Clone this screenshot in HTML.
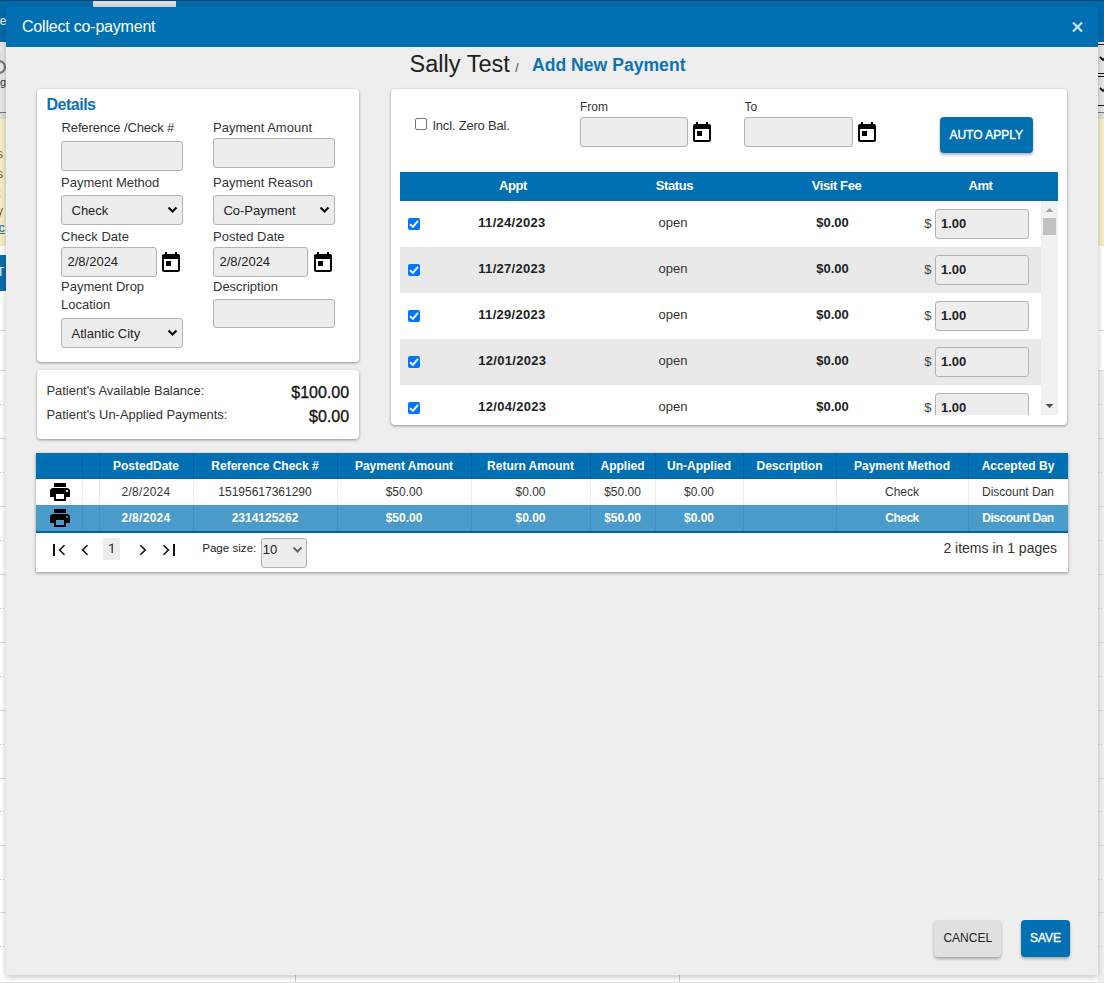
<!DOCTYPE html>
<html><head><meta charset="utf-8">
<style>
*{box-sizing:border-box;margin:0;padding:0}
html,body{width:1104px;height:983px;overflow:hidden;background:#fff;font-family:"Liberation Sans",sans-serif;color:#333}
.a{position:absolute}
.t{position:absolute;white-space:nowrap;line-height:1}
.panel{position:absolute;background:#fff;border-radius:4px;box-shadow:0 1px 3px rgba(0,0,0,.4)}
</style></head>
<body>
<div class="a" style="left:0px;top:0px;width:1104px;height:42px;background:#006bab"></div>
<div class="a" style="left:0px;top:0px;width:1104px;height:1px;background:#00466f"></div>
<div class="a" style="left:93px;top:1px;width:83px;height:6px;background:#dcdcdc"></div>
<div class="a" style="left:0px;top:42px;width:1104px;height:70px;background:#e6e6e6"></div>
<div class="a" style="left:0px;top:112px;width:1104px;height:1px;background:#7a7a7a"></div>
<div class="a" style="left:0px;top:113px;width:1104px;height:6px;background:#dedede"></div>
<div class="a" style="left:0px;top:119px;width:1104px;height:127px;background:#f7ecc9"></div>
<div class="a" style="left:0px;top:255px;width:8px;height:36px;background:#0a6eb0"></div>
<div class="t" style="left:-3px;top:14.84px;font-size:12px;color:#fff;font-weight:normal;">ie</div>
<svg class="a" style="left:-8px;top:50px" width="14" height="28" viewBox="0 0 14 28"><circle cx="7" cy="17" r="6" stroke="#777" stroke-width="2.2" fill="none"/><path d="M7 2V10" stroke="#777" stroke-width="2.2"/></svg>
<div class="t" style="left:-6px;top:76.69px;font-size:11px;color:#333;font-weight:normal;">ng</div>
<div class="t" style="left:-3px;top:147.84px;font-size:12px;color:#6a5a3a;font-weight:normal;">s</div>
<div class="t" style="left:-3px;top:167.84px;font-size:12px;color:#6a5a3a;font-weight:normal;">s</div>
<div class="t" style="left:-3px;top:186.84px;font-size:12px;color:#6a5a3a;font-weight:normal;">t</div>
<div class="t" style="left:-3px;top:204.84px;font-size:12px;color:#6a5a3a;font-weight:normal;">y</div>
<div class="t" style="left:-8px;top:222.34px;font-size:12px;color:#1a6fb0;font-weight:normal;text-decoration:underline">ec</div>
<div class="t" style="left:-3px;top:266.34px;font-size:12px;color:#fff;font-weight:normal;">T</div>
<div class="a" style="left:1098px;top:44px;width:6px;height:1px;background:#111"></div>
<div class="a" style="left:1098px;top:73px;width:6px;height:1px;background:#111"></div>
<div class="a" style="left:1098px;top:76px;width:6px;height:1px;background:#111"></div>
<div class="a" style="left:1098px;top:105px;width:6px;height:1px;background:#111"></div>
<svg class="a" style="left:1099px;top:56px" width="8" height="6" viewBox="0 0 8 6"><path d="M1 1L4 4L7 1" stroke="#111" stroke-width="1.8" fill="none"/></svg>
<svg class="a" style="left:1099px;top:87px" width="8" height="6" viewBox="0 0 8 6"><path d="M1 1L4 4L7 1" stroke="#111" stroke-width="1.8" fill="none"/></svg>
<div class="a" style="left:1098px;top:371px;width:6px;height:612px;background:#f0f0f0"></div>
<div class="a" style="left:0px;top:330px;width:1104px;height:1px;background:#dcdcdc"></div>
<div class="a" style="left:0px;top:370px;width:1104px;height:1px;background:#dcdcdc"></div>
<div class="a" style="left:0px;top:404px;width:1104px;height:1px;background:repeating-linear-gradient(90deg,#c8c8c8 0 1px,transparent 1px 3px)"></div>
<div class="a" style="left:0px;top:438px;width:1104px;height:1px;background:#dcdcdc"></div>
<div class="a" style="left:0px;top:472px;width:1104px;height:1px;background:repeating-linear-gradient(90deg,#c8c8c8 0 1px,transparent 1px 3px)"></div>
<div class="a" style="left:0px;top:506px;width:1104px;height:1px;background:#dcdcdc"></div>
<div class="a" style="left:0px;top:540px;width:1104px;height:1px;background:repeating-linear-gradient(90deg,#c8c8c8 0 1px,transparent 1px 3px)"></div>
<div class="a" style="left:0px;top:574px;width:1104px;height:1px;background:#dcdcdc"></div>
<div class="a" style="left:0px;top:608px;width:1104px;height:1px;background:repeating-linear-gradient(90deg,#c8c8c8 0 1px,transparent 1px 3px)"></div>
<div class="a" style="left:0px;top:642px;width:1104px;height:1px;background:#dcdcdc"></div>
<div class="a" style="left:0px;top:676px;width:1104px;height:1px;background:repeating-linear-gradient(90deg,#c8c8c8 0 1px,transparent 1px 3px)"></div>
<div class="a" style="left:0px;top:710px;width:1104px;height:1px;background:#dcdcdc"></div>
<div class="a" style="left:0px;top:744px;width:1104px;height:1px;background:repeating-linear-gradient(90deg,#c8c8c8 0 1px,transparent 1px 3px)"></div>
<div class="a" style="left:0px;top:778px;width:1104px;height:1px;background:#dcdcdc"></div>
<div class="a" style="left:0px;top:811px;width:1104px;height:1px;background:repeating-linear-gradient(90deg,#c8c8c8 0 1px,transparent 1px 3px)"></div>
<div class="a" style="left:0px;top:845px;width:1104px;height:1px;background:#dcdcdc"></div>
<div class="a" style="left:0px;top:879px;width:1104px;height:1px;background:repeating-linear-gradient(90deg,#c8c8c8 0 1px,transparent 1px 3px)"></div>
<div class="a" style="left:0px;top:912px;width:1104px;height:1px;background:#dcdcdc"></div>
<div class="a" style="left:0px;top:946px;width:1104px;height:1px;background:repeating-linear-gradient(90deg,#c8c8c8 0 1px,transparent 1px 3px)"></div>
<div class="a" style="left:0px;top:982px;width:1104px;height:1px;background:#e3e3e3"></div>
<div class="a" style="left:295px;top:975px;width:1px;height:7px;background:#d0d0d0"></div>
<div class="a" style="left:679px;top:975px;width:1px;height:7px;background:#d0d0d0"></div>
<div class="a" style="left:6px;top:7px;width:1092px;height:968px;background:#eeeeee;box-shadow:0 2px 6px rgba(0,0,0,.25)"></div>
<div class="a" style="left:6px;top:7px;width:1092px;height:40px;background:#0070b2"></div>
<div class="t" style="left:22px;top:19.06px;font-size:16px;color:#fff;font-weight:normal;letter-spacing:-0.2px">Collect co-payment</div>
<svg class="a" style="left:1072px;top:22px" width="11" height="10" viewBox="0 0 11 10"><path d="M1 0.5L10 9.5M10 0.5L1 9.5" stroke="#cde3f2" stroke-width="2.2"/></svg>
<div class="t" style="left:409.6px;top:52.71px;font-size:23.5px;color:#212121;font-weight:normal;">Sally Test</div>
<div class="t" style="left:515.3px;top:62.34px;font-size:12px;color:#444;font-weight:normal;">/</div>
<div class="t" style="left:532px;top:56.50px;font-size:17.6px;color:#0e72b5;font-weight:bold;">Add New Payment</div>
<div class="panel" style="left:37px;top:89px;width:322px;height:273px"></div>
<div class="t" style="left:46.5px;top:97.46px;font-size:16px;color:#0e72b5;font-weight:bold;letter-spacing:-0.5px">Details</div>
<div class="t" style="left:61.5px;top:120.80px;font-size:13px;color:#333;font-weight:normal;letter-spacing:-0.12px">Reference /Check #</div>
<div class="t" style="left:213px;top:120.60px;font-size:13px;color:#333;font-weight:normal;">Payment Amount</div>
<div class="a" style="left:61px;top:141px;width:122px;height:30px;background:#ededed;border:1px solid #b3b3b3;border-radius:3px"></div>
<div class="a" style="left:213px;top:138px;width:122px;height:30px;background:#ededed;border:1px solid #b3b3b3;border-radius:3px"></div>
<div class="t" style="left:61px;top:176.00px;font-size:13px;color:#333;font-weight:normal;">Payment Method</div>
<div class="t" style="left:213px;top:176.00px;font-size:13px;color:#333;font-weight:normal;">Payment Reason</div>
<div class="a" style="left:61px;top:195px;width:122px;height:30px;background:#ededed;border:1px solid #b3b3b3;border-radius:3px"></div>
<div class="t" style="left:71.5px;top:204.20px;font-size:13px;color:#222;font-weight:normal;">Check</div>
<svg class="a" style="left:167px;top:206px" width="11" height="8" viewBox="0 0 11 8"><path d="M1.5 1.5L5.5 5.5L9.5 1.5" stroke="#111" stroke-width="2.2" fill="none"/></svg>
<div class="a" style="left:213px;top:195px;width:122px;height:30px;background:#ededed;border:1px solid #b3b3b3;border-radius:3px"></div>
<div class="t" style="left:223.4px;top:204.20px;font-size:13px;color:#222;font-weight:normal;">Co-Payment</div>
<svg class="a" style="left:319px;top:206px" width="11" height="8" viewBox="0 0 11 8"><path d="M1.5 1.5L5.5 5.5L9.5 1.5" stroke="#111" stroke-width="2.2" fill="none"/></svg>
<div class="t" style="left:61px;top:230.00px;font-size:13px;color:#333;font-weight:normal;">Check Date</div>
<div class="t" style="left:213px;top:230.00px;font-size:13px;color:#333;font-weight:normal;">Posted Date</div>
<div class="a" style="left:61px;top:247px;width:96px;height:30px;background:#ededed;border:1px solid #b3b3b3;border-radius:3px"></div>
<div class="t" style="left:67.5px;top:254.80px;font-size:13px;color:#222;font-weight:normal;">2/8/2024</div>
<div class="a" style="left:213px;top:247px;width:95px;height:30px;background:#ededed;border:1px solid #b3b3b3;border-radius:3px"></div>
<div class="t" style="left:219.5px;top:254.80px;font-size:13px;color:#222;font-weight:normal;">2/8/2024</div>
<svg class="a" style="left:159px;top:251px" width="24" height="24" viewBox="0 0 24 24"><path d="M19 3h-1V1h-2v2H8V1H6v2H5c-1.11 0-1.99.9-1.99 2L3 19c0 1.1.89 2 2 2h14c1.1 0 2-.9 2-2V5c0-1.1-.9-2-2-2zm0 16H5V8h14v11zM7 10h5v5H7z"/></svg>
<svg class="a" style="left:311px;top:251px" width="24" height="24" viewBox="0 0 24 24"><path d="M19 3h-1V1h-2v2H8V1H6v2H5c-1.11 0-1.99.9-1.99 2L3 19c0 1.1.89 2 2 2h14c1.1 0 2-.9 2-2V5c0-1.1-.9-2-2-2zm0 16H5V8h14v11zM7 10h5v5H7z"/></svg>
<div class="t" style="left:61px;top:280.00px;font-size:13px;color:#333;font-weight:normal;">Payment Drop</div>
<div class="t" style="left:61px;top:297.80px;font-size:13px;color:#333;font-weight:normal;">Location</div>
<div class="t" style="left:213px;top:280.40px;font-size:13px;color:#333;font-weight:normal;">Description</div>
<div class="a" style="left:61px;top:318px;width:122px;height:30px;background:#ededed;border:1px solid #b3b3b3;border-radius:3px"></div>
<div class="t" style="left:71.5px;top:327.20px;font-size:13px;color:#222;font-weight:normal;">Atlantic City</div>
<svg class="a" style="left:167px;top:329px" width="11" height="8" viewBox="0 0 11 8"><path d="M1.5 1.5L5.5 5.5L9.5 1.5" stroke="#111" stroke-width="2.2" fill="none"/></svg>
<div class="a" style="left:213px;top:299px;width:122px;height:29px;background:#ededed;border:1px solid #b3b3b3;border-radius:3px"></div>
<div class="panel" style="left:37px;top:370px;width:322px;height:69px"></div>
<div class="t" style="left:46.5px;top:384.78px;font-size:12.9px;color:#333;font-weight:normal;">Patient's Available Balance:</div>
<div class="t" style="left:46.5px;top:408.88px;font-size:12.9px;color:#333;font-weight:normal;">Patient's Un-Applied Payments:</div>
<div class="t" style="right:754.9px;top:385.06px;font-size:16px;color:#111;font-weight:normal;-webkit-text-stroke:0.3px #111">$100.00</div>
<div class="t" style="right:754.9px;top:409.06px;font-size:16px;color:#111;font-weight:normal;-webkit-text-stroke:0.3px #111">$0.00</div>
<div class="panel" style="left:391px;top:89px;width:676px;height:336px"></div>
<div class="a" style="left:415px;top:118px;width:12px;height:12px;border:1px solid #767676;border-radius:2px;background:#fff"></div>
<div class="t" style="left:432.4px;top:119.00px;font-size:13px;color:#333;font-weight:normal;letter-spacing:-0.2px">Incl. Zero Bal.</div>
<div class="t" style="left:580px;top:100.84px;font-size:12px;color:#333;font-weight:normal;">From</div>
<div class="a" style="left:580px;top:117px;width:108px;height:30px;background:#ededed;border:1px solid #b3b3b3;border-radius:3px"></div>
<svg class="a" style="left:690px;top:121px" width="24" height="24" viewBox="0 0 24 24"><path d="M19 3h-1V1h-2v2H8V1H6v2H5c-1.11 0-1.99.9-1.99 2L3 19c0 1.1.89 2 2 2h14c1.1 0 2-.9 2-2V5c0-1.1-.9-2-2-2zm0 16H5V8h14v11zM7 10h5v5H7z"/></svg>
<div class="t" style="left:744.5px;top:100.84px;font-size:12px;color:#333;font-weight:normal;">To</div>
<div class="a" style="left:744px;top:117px;width:109px;height:30px;background:#ededed;border:1px solid #b3b3b3;border-radius:3px"></div>
<svg class="a" style="left:855px;top:121px" width="24" height="24" viewBox="0 0 24 24"><path d="M19 3h-1V1h-2v2H8V1H6v2H5c-1.11 0-1.99.9-1.99 2L3 19c0 1.1.89 2 2 2h14c1.1 0 2-.9 2-2V5c0-1.1-.9-2-2-2zm0 16H5V8h14v11zM7 10h5v5H7z"/></svg>
<div class="a" style="left:940px;top:117px;width:93px;height:36px;background:#0070b2;border-radius:4px;box-shadow:0 2px 3px rgba(0,0,0,.3)"></div>
<div class="t" style="left:949.4px;top:128.74px;font-size:12px;color:#fff;font-weight:normal;-webkit-text-stroke:0.35px #fff">AUTO APPLY</div>
<div class="a" style="left:400px;top:172px;width:658px;height:29px;background:#0070b2"></div>
<div class="t" style="left:430px;width:166px;text-align:center;top:179.00px;font-size:13px;color:#fff;font-weight:bold;letter-spacing:-0.4px">Appt</div>
<div class="t" style="left:596px;width:157px;text-align:center;top:179.00px;font-size:13px;color:#fff;font-weight:bold;letter-spacing:-0.4px">Status</div>
<div class="t" style="left:753px;width:167px;text-align:center;top:179.00px;font-size:13px;color:#fff;font-weight:bold;letter-spacing:-0.4px">Visit Fee</div>
<div class="t" style="left:920px;width:121px;text-align:center;top:179.00px;font-size:13px;color:#fff;font-weight:bold;letter-spacing:-0.4px">Amt</div>
<div class="a" style="left:400px;top:201px;width:641px;height:214px;overflow:hidden">
<svg class="a" style="left:8px;top:17px" width="12" height="12" viewBox="0 0 12 12"><rect x="0" y="0" width="12" height="12" rx="2" fill="#0075ff"/><path d="M2 6.2L4.9 8.9L10 2.8" stroke="#fff" stroke-width="2" fill="none"/></svg>
<div class="t" style="left:78.3px;top:15.10px;font-size:13px;color:#222;font-weight:bold;letter-spacing:0.3px">11/24/2023</div>
<div class="t" style="left:258.6px;top:15.00px;font-size:13px;color:#333;font-weight:normal;">open</div>
<div class="t" style="left:416.2px;top:15.00px;font-size:13px;color:#222;font-weight:bold;">$0.00</div>
<div class="t" style="left:524.3px;top:16.00px;font-size:13px;color:#444;font-weight:normal;">$</div>
<div class="a" style="left:535px;top:8px;width:94px;height:30px;background:#ededed;border:1px solid #b3b3b3;border-radius:3px"></div>
<div class="t" style="left:541px;top:16.00px;font-size:13px;color:#222;font-weight:bold;">1.00</div>
<div class="a" style="left:0px;top:46px;width:641px;height:46px;background:#e9e9e9"></div>
<svg class="a" style="left:8px;top:63px" width="12" height="12" viewBox="0 0 12 12"><rect x="0" y="0" width="12" height="12" rx="2" fill="#0075ff"/><path d="M2 6.2L4.9 8.9L10 2.8" stroke="#fff" stroke-width="2" fill="none"/></svg>
<div class="t" style="left:78.3px;top:61.10px;font-size:13px;color:#222;font-weight:bold;letter-spacing:0.3px">11/27/2023</div>
<div class="t" style="left:258.6px;top:61.00px;font-size:13px;color:#333;font-weight:normal;">open</div>
<div class="t" style="left:416.2px;top:61.00px;font-size:13px;color:#222;font-weight:bold;">$0.00</div>
<div class="t" style="left:524.3px;top:62.00px;font-size:13px;color:#444;font-weight:normal;">$</div>
<div class="a" style="left:535px;top:54px;width:94px;height:30px;background:#ededed;border:1px solid #b3b3b3;border-radius:3px"></div>
<div class="t" style="left:541px;top:62.00px;font-size:13px;color:#222;font-weight:bold;">1.00</div>
<svg class="a" style="left:8px;top:109px" width="12" height="12" viewBox="0 0 12 12"><rect x="0" y="0" width="12" height="12" rx="2" fill="#0075ff"/><path d="M2 6.2L4.9 8.9L10 2.8" stroke="#fff" stroke-width="2" fill="none"/></svg>
<div class="t" style="left:78.3px;top:107.10px;font-size:13px;color:#222;font-weight:bold;letter-spacing:0.3px">11/29/2023</div>
<div class="t" style="left:258.6px;top:107.00px;font-size:13px;color:#333;font-weight:normal;">open</div>
<div class="t" style="left:416.2px;top:107.00px;font-size:13px;color:#222;font-weight:bold;">$0.00</div>
<div class="t" style="left:524.3px;top:108.00px;font-size:13px;color:#444;font-weight:normal;">$</div>
<div class="a" style="left:535px;top:100px;width:94px;height:30px;background:#ededed;border:1px solid #b3b3b3;border-radius:3px"></div>
<div class="t" style="left:541px;top:108.00px;font-size:13px;color:#222;font-weight:bold;">1.00</div>
<div class="a" style="left:0px;top:138px;width:641px;height:46px;background:#e9e9e9"></div>
<svg class="a" style="left:8px;top:155px" width="12" height="12" viewBox="0 0 12 12"><rect x="0" y="0" width="12" height="12" rx="2" fill="#0075ff"/><path d="M2 6.2L4.9 8.9L10 2.8" stroke="#fff" stroke-width="2" fill="none"/></svg>
<div class="t" style="left:78.3px;top:153.10px;font-size:13px;color:#222;font-weight:bold;letter-spacing:0.3px">12/01/2023</div>
<div class="t" style="left:258.6px;top:153.00px;font-size:13px;color:#333;font-weight:normal;">open</div>
<div class="t" style="left:416.2px;top:153.00px;font-size:13px;color:#222;font-weight:bold;">$0.00</div>
<div class="t" style="left:524.3px;top:154.00px;font-size:13px;color:#444;font-weight:normal;">$</div>
<div class="a" style="left:535px;top:146px;width:94px;height:30px;background:#ededed;border:1px solid #b3b3b3;border-radius:3px"></div>
<div class="t" style="left:541px;top:154.00px;font-size:13px;color:#222;font-weight:bold;">1.00</div>
<svg class="a" style="left:8px;top:201px" width="12" height="12" viewBox="0 0 12 12"><rect x="0" y="0" width="12" height="12" rx="2" fill="#0075ff"/><path d="M2 6.2L4.9 8.9L10 2.8" stroke="#fff" stroke-width="2" fill="none"/></svg>
<div class="t" style="left:78.3px;top:199.10px;font-size:13px;color:#222;font-weight:bold;letter-spacing:0.3px">12/04/2023</div>
<div class="t" style="left:258.6px;top:199.00px;font-size:13px;color:#333;font-weight:normal;">open</div>
<div class="t" style="left:416.2px;top:199.00px;font-size:13px;color:#222;font-weight:bold;">$0.00</div>
<div class="t" style="left:524.3px;top:200.00px;font-size:13px;color:#444;font-weight:normal;">$</div>
<div class="a" style="left:535px;top:192px;width:94px;height:30px;background:#ededed;border:1px solid #b3b3b3;border-radius:3px"></div>
<div class="t" style="left:541px;top:200.00px;font-size:13px;color:#222;font-weight:bold;">1.00</div>
</div>
<div class="a" style="left:1041px;top:201px;width:17px;height:214px;background:#f1f1f1"></div>
<svg class="a" style="left:1045px;top:207px" width="9" height="6" viewBox="0 0 9 6"><path d="M0.5 5L4.5 1L8.5 5z" fill="#a3a3a3"/></svg>
<div class="a" style="left:1043px;top:218px;width:13px;height:17px;background:#c1c1c1"></div>
<svg class="a" style="left:1045px;top:403px" width="9" height="6" viewBox="0 0 9 6"><path d="M0.5 1L4.5 5L8.5 1z" fill="#505050"/></svg>
<div class="panel" style="left:36px;top:453px;width:1032px;height:119px;border-radius:0"></div>
<div class="a" style="left:36px;top:453px;width:1032px;height:26px;background:#0070b2"></div>
<div class="a" style="left:36px;top:505px;width:1032px;height:26px;background:#4a9bc9"></div>
<div class="a" style="left:36px;top:478px;width:1032px;height:1px;background:#0063a3"></div>
<div class="a" style="left:36px;top:531px;width:1032px;height:2px;background:#0064a3"></div>
<div class="a" style="left:82px;top:453px;width:1px;height:26px;background:#0062a0"></div>
<div class="a" style="left:82px;top:479px;width:1px;height:26px;background:#ececec"></div>
<div class="a" style="left:82px;top:505px;width:1px;height:26px;background:#4190bf"></div>
<div class="a" style="left:99px;top:453px;width:1px;height:26px;background:#0062a0"></div>
<div class="a" style="left:99px;top:479px;width:1px;height:26px;background:#ececec"></div>
<div class="a" style="left:99px;top:505px;width:1px;height:26px;background:#4190bf"></div>
<div class="a" style="left:193px;top:453px;width:1px;height:26px;background:#0062a0"></div>
<div class="a" style="left:193px;top:479px;width:1px;height:26px;background:#ececec"></div>
<div class="a" style="left:193px;top:505px;width:1px;height:26px;background:#4190bf"></div>
<div class="a" style="left:337px;top:453px;width:1px;height:26px;background:#0062a0"></div>
<div class="a" style="left:337px;top:479px;width:1px;height:26px;background:#ececec"></div>
<div class="a" style="left:337px;top:505px;width:1px;height:26px;background:#4190bf"></div>
<div class="a" style="left:471px;top:453px;width:1px;height:26px;background:#0062a0"></div>
<div class="a" style="left:471px;top:479px;width:1px;height:26px;background:#ececec"></div>
<div class="a" style="left:471px;top:505px;width:1px;height:26px;background:#4190bf"></div>
<div class="a" style="left:590px;top:453px;width:1px;height:26px;background:#0062a0"></div>
<div class="a" style="left:590px;top:479px;width:1px;height:26px;background:#ececec"></div>
<div class="a" style="left:590px;top:505px;width:1px;height:26px;background:#4190bf"></div>
<div class="a" style="left:655px;top:453px;width:1px;height:26px;background:#0062a0"></div>
<div class="a" style="left:655px;top:479px;width:1px;height:26px;background:#ececec"></div>
<div class="a" style="left:655px;top:505px;width:1px;height:26px;background:#4190bf"></div>
<div class="a" style="left:743px;top:453px;width:1px;height:26px;background:#0062a0"></div>
<div class="a" style="left:743px;top:479px;width:1px;height:26px;background:#ececec"></div>
<div class="a" style="left:743px;top:505px;width:1px;height:26px;background:#4190bf"></div>
<div class="a" style="left:836px;top:453px;width:1px;height:26px;background:#0062a0"></div>
<div class="a" style="left:836px;top:479px;width:1px;height:26px;background:#ececec"></div>
<div class="a" style="left:836px;top:505px;width:1px;height:26px;background:#4190bf"></div>
<div class="a" style="left:968px;top:453px;width:1px;height:26px;background:#0062a0"></div>
<div class="a" style="left:968px;top:479px;width:1px;height:26px;background:#ececec"></div>
<div class="a" style="left:968px;top:505px;width:1px;height:26px;background:#4190bf"></div>
<div class="t" style="left:99px;width:94px;text-align:center;top:459.64px;font-size:12px;color:#fff;font-weight:bold;">PostedDate</div>
<div class="t" style="left:99px;width:94px;text-align:center;top:485.74px;font-size:12px;color:#333;font-weight:normal;letter-spacing:0.3px">2/8/2024</div>
<div class="t" style="left:99px;width:94px;text-align:center;top:511.64px;font-size:12px;color:#fff;font-weight:bold;letter-spacing:0.3px">2/8/2024</div>
<div class="t" style="left:193px;width:144px;text-align:center;top:459.64px;font-size:12px;color:#fff;font-weight:bold;">Reference Check #</div>
<div class="t" style="left:193px;width:144px;text-align:center;top:485.74px;font-size:12px;color:#333;font-weight:normal;">15195617361290</div>
<div class="t" style="left:193px;width:144px;text-align:center;top:511.64px;font-size:12px;color:#fff;font-weight:bold;">2314125262</div>
<div class="t" style="left:337px;width:134px;text-align:center;top:459.64px;font-size:12px;color:#fff;font-weight:bold;">Payment Amount</div>
<div class="t" style="left:337px;width:134px;text-align:center;top:485.74px;font-size:12px;color:#333;font-weight:normal;">$50.00</div>
<div class="t" style="left:337px;width:134px;text-align:center;top:511.64px;font-size:12px;color:#fff;font-weight:bold;">$50.00</div>
<div class="t" style="left:471px;width:119px;text-align:center;top:459.64px;font-size:12px;color:#fff;font-weight:bold;">Return Amount</div>
<div class="t" style="left:471px;width:119px;text-align:center;top:485.74px;font-size:12px;color:#333;font-weight:normal;">$0.00</div>
<div class="t" style="left:471px;width:119px;text-align:center;top:511.64px;font-size:12px;color:#fff;font-weight:bold;">$0.00</div>
<div class="t" style="left:590px;width:65px;text-align:center;top:459.64px;font-size:12px;color:#fff;font-weight:bold;">Applied</div>
<div class="t" style="left:590px;width:65px;text-align:center;top:485.74px;font-size:12px;color:#333;font-weight:normal;">$50.00</div>
<div class="t" style="left:590px;width:65px;text-align:center;top:511.64px;font-size:12px;color:#fff;font-weight:bold;">$50.00</div>
<div class="t" style="left:655px;width:88px;text-align:center;top:459.64px;font-size:12px;color:#fff;font-weight:bold;">Un-Applied</div>
<div class="t" style="left:655px;width:88px;text-align:center;top:485.74px;font-size:12px;color:#333;font-weight:normal;">$0.00</div>
<div class="t" style="left:655px;width:88px;text-align:center;top:511.64px;font-size:12px;color:#fff;font-weight:bold;">$0.00</div>
<div class="t" style="left:743px;width:93px;text-align:center;top:459.64px;font-size:12px;color:#fff;font-weight:bold;">Description</div>
<div class="t" style="left:836px;width:132px;text-align:center;top:459.64px;font-size:12px;color:#fff;font-weight:bold;">Payment Method</div>
<div class="t" style="left:836px;width:132px;text-align:center;top:485.74px;font-size:12px;color:#333;font-weight:normal;">Check</div>
<div class="t" style="left:836px;width:132px;text-align:center;top:511.64px;font-size:12px;color:#fff;font-weight:bold;letter-spacing:-0.5px">Check</div>
<div class="t" style="left:968px;width:100px;text-align:center;top:459.64px;font-size:12px;color:#fff;font-weight:bold;">Accepted By</div>
<div class="t" style="left:968px;width:100px;text-align:center;top:485.74px;font-size:12px;color:#333;font-weight:normal;">Discount Dan</div>
<div class="t" style="left:968px;width:100px;text-align:center;top:511.64px;font-size:12px;color:#fff;font-weight:bold;letter-spacing:-0.5px">Discount Dan</div>
<svg class="a" style="left:48px;top:480px" width="24" height="24" viewBox="0 0 24 24"><path d="M19 8H5c-1.66 0-3 1.34-3 3v6h4v4h12v-4h4v-6c0-1.66-1.34-3-3-3zm-3 11H8v-5h8v5zm3-7c-.55 0-1-.45-1-1s.45-1 1-1 1 .45 1 1-.45 1-1 1zm1-9H6v4h12V3z"/></svg>
<svg class="a" style="left:48px;top:506px" width="24" height="24" viewBox="0 0 24 24"><path d="M19 8H5c-1.66 0-3 1.34-3 3v6h4v4h12v-4h4v-6c0-1.66-1.34-3-3-3zm-3 11H8v-5h8v5zm3-7c-.55 0-1-.45-1-1s.45-1 1-1 1 .45 1 1-.45 1-1 1zm1-9H6v4h12V3z"/></svg>
<svg class="a" style="left:50px;top:540px" width="130" height="20" viewBox="0 0 130 20"><rect x="3" y="4" width="2" height="12" fill="#111"/><path d="M14.5 5.2L9.6 10L14.5 14.8" stroke="#111" stroke-width="1.6" fill="none"/><path d="M37.5 5.2L32.6 10L37.5 14.8" stroke="#111" stroke-width="1.6" fill="none"/><path d="M90.3 5.2L95.2 10L90.3 14.8" stroke="#111" stroke-width="1.6" fill="none"/><path d="M113.5 5.2L118.4 10L113.5 14.8" stroke="#111" stroke-width="1.6" fill="none"/><rect x="123" y="4" width="2" height="12" fill="#111"/></svg>
<div class="a" style="left:103px;top:538px;width:17px;height:22px;background:#ececec"></div>
<svg class="a" style="left:103px;top:538px" width="17" height="22" viewBox="0 0 17 22"><path d="M9.2 6V15" stroke="#333" stroke-width="1.3" fill="none"/><path d="M9.8 5.9L6.2 7.4" stroke="#333" stroke-width="1.1" fill="none"/></svg>
<div class="t" style="left:202.2px;top:542.38px;font-size:11.6px;color:#222;font-weight:normal;">Page size:</div>
<div class="a" style="left:261px;top:538px;width:46px;height:30px;background:#ededed;border:1px solid #b3b3b3;border-radius:3px"></div>
<div class="t" style="left:262.8px;top:542.50px;font-size:13px;color:#222;font-weight:normal;">10</div>
<svg class="a" style="left:292px;top:546px" width="11" height="8" viewBox="0 0 11 8"><path d="M1.5 1.5L5.5 5.5L9.5 1.5" stroke="#666" stroke-width="2" fill="none"/></svg>
<div class="t" style="right:47px;top:540.75px;font-size:14px;color:#333;font-weight:normal;">2 items in 1 pages</div>
<div class="a" style="left:934px;top:920px;width:67px;height:37px;background:#e0e0e0;border-radius:4px;box-shadow:0 2px 3px rgba(0,0,0,.3)"></div>
<div class="t" style="left:943.4px;top:931.84px;font-size:12px;color:#222;font-weight:normal;">CANCEL</div>
<div class="a" style="left:1021px;top:920px;width:49px;height:37px;background:#0070b2;border-radius:4px;box-shadow:0 2px 3px rgba(0,0,0,.3)"></div>
<div class="t" style="left:1030px;top:931.84px;font-size:12px;color:#fff;font-weight:normal;-webkit-text-stroke:0.35px #fff">SAVE</div>
</body></html>
